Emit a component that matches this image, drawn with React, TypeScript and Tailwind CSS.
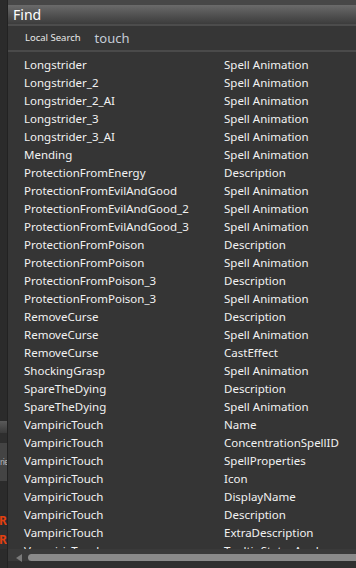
import React from "react";

const rows: [string, string][] = [
  ["Longstrider", "Spell Animation"],
  ["Longstrider_2", "Spell Animation"],
  ["Longstrider_2_AI", "Spell Animation"],
  ["Longstrider_3", "Spell Animation"],
  ["Longstrider_3_AI", "Spell Animation"],
  ["Mending", "Spell Animation"],
  ["ProtectionFromEnergy", "Description"],
  ["ProtectionFromEvilAndGood", "Spell Animation"],
  ["ProtectionFromEvilAndGood_2", "Spell Animation"],
  ["ProtectionFromEvilAndGood_3", "Spell Animation"],
  ["ProtectionFromPoison", "Description"],
  ["ProtectionFromPoison", "Spell Animation"],
  ["ProtectionFromPoison_3", "Description"],
  ["ProtectionFromPoison_3", "Spell Animation"],
  ["RemoveCurse", "Description"],
  ["RemoveCurse", "Spell Animation"],
  ["RemoveCurse", "CastEffect"],
  ["ShockingGrasp", "Spell Animation"],
  ["SpareTheDying", "Description"],
  ["SpareTheDying", "Spell Animation"],
  ["VampiricTouch", "Name"],
  ["VampiricTouch", "ConcentrationSpellID"],
  ["VampiricTouch", "SpellProperties"],
  ["VampiricTouch", "Icon"],
  ["VampiricTouch", "DisplayName"],
  ["VampiricTouch", "Description"],
  ["VampiricTouch", "ExtraDescription"],
  ["VampiricTouch", "TooltipStatusApply"],
];

export default function App() {
  return (
    <div
      className="flex w-[356px] h-[568px] overflow-hidden bg-[#2b2b2b]"
      style={{ fontFamily: '"Noto Sans", "Open Sans", sans-serif' }}
    >
      {/* background sliver of another window */}
      <div className="w-[8px] flex flex-col bg-[#2b2b2b] border-r border-[#222] overflow-hidden">
        <div className="h-[421px]" />
        <div className="h-[12px] bg-gradient-to-b from-[#5a5a5a] to-[#3a3a3a]" />
        <div className="h-[10px] bg-[#2e2e2e]" />
        <div className="h-[38px] bg-[#444] flex items-center">
          <span className="text-[8px] tracking-[-0.5px] text-[#bbb] leading-none">rie</span>
        </div>
        <div className="h-[30px]" />
        <div className="h-[19px] flex items-center text-[12px] font-bold text-[#e04010] leading-none -ml-[1px]">R</div>
        <div className="h-[19px] flex items-center text-[12px] font-bold text-[#e04010] leading-none -ml-[1px] bg-[#303030]">R</div>
      </div>

      {/* Find window */}
      <div className="flex-1 flex flex-col bg-[#353535] min-w-0">
        <div className="h-[5px] bg-[#474747]" />
        <div className="h-[19px] bg-gradient-to-b from-[#6a6a6a] to-[#3c3c3c] flex items-center pl-[5px]">
          <span className="text-[14px] text-white leading-none">Find</span>
        </div>
        <div className="h-[2px] bg-[#4c4c4c]" />
        <div className="h-[24px] bg-[#363636] flex items-center">
          <span className="ml-[17px] text-[9.5px] text-[#e8e8e8] leading-none">Local Search</span>
          <span className="ml-[14px] text-[13px] text-[#c4ccd6] leading-none">touch</span>
        </div>
        <div className="h-[2px] bg-[#4a4a4a]" />
        <div className="h-[497px] overflow-hidden pt-[4px]">
          {rows.map(([a, b], i) => (
            <div key={i} className="h-[18px] flex items-center text-[11.5px] text-[#f2f2f2] leading-none whitespace-nowrap">
              <span className="w-[200px] pl-[16px]">{a}</span>
              <span className="pl-[16px]">{b}</span>
            </div>
          ))}
        </div>
        <div className="flex-1 bg-[#2f2f2f] flex flex-col">
          <div className="h-[5px] bg-[#3a3a3a]" />
          <div className="h-[7px] bg-[#3a3a3a] flex items-center">
            <div className="w-0 h-0 ml-[8px] border-y-[4px] border-y-transparent border-r-[6px] border-r-[#7a7a7a]" />
            <div className="ml-[6px] flex-1 h-[7px] rounded-l-full bg-[#8a8a8a]" />
          </div>
        </div>
      </div>
    </div>
  );
}
